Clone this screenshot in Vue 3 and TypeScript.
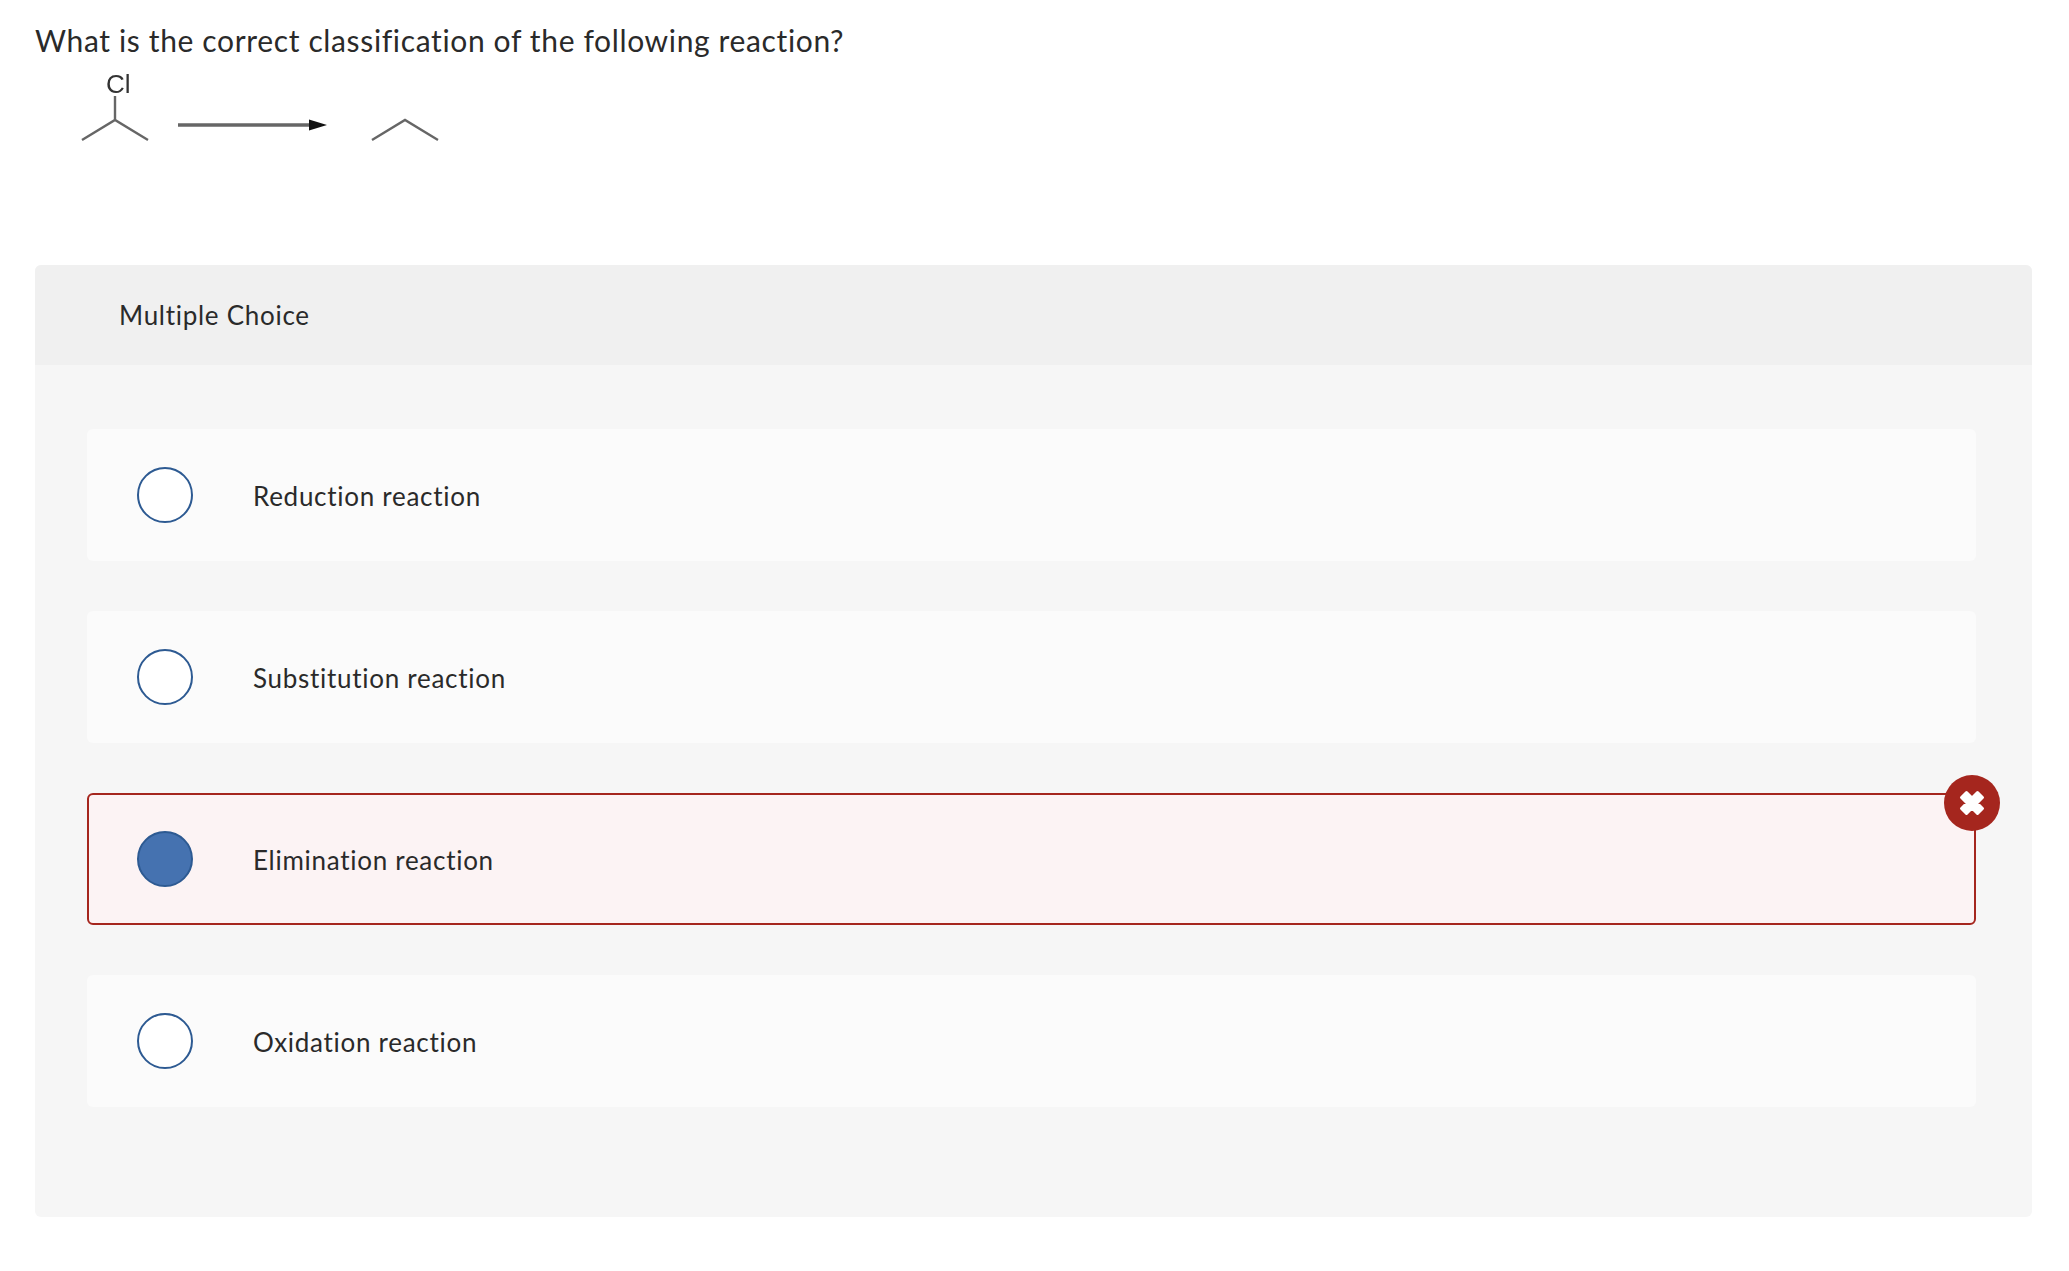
<script setup lang="ts">
interface Choice { label: string; selected: boolean }
const choices: Choice[] = [
  { label: 'Reduction reaction', selected: false },
  { label: 'Substitution reaction', selected: false },
  { label: 'Elimination reaction', selected: true },
  { label: 'Oxidation reaction', selected: false },
]
</script>

<template>
  <main class="page">
    <h1 class="question">What is the correct classification of the following reaction?</h1>
    <div class="figure">
      <svg class="scheme" width="400" height="80" viewBox="0 0 400 80">
        <text class="cl" x="71" y="20.5">Cl</text>
        <g class="bond">
          <path d="M80 24V48M47 68 80 48 113 68" />
          <path d="M337 68 370 48 403 68" />
        </g>
        <path class="arrow" d="M143 53H280" />
        <path class="head" d="M274 47.500 292 53 274 58.500Z" />
      </svg>
    </div>
    <section class="panel">
      <header class="panel-head">Multiple Choice</header>
      <div class="list">
        <div v-for="c in choices" :key="c.label" class="row" :class="{ wrong: c.selected }">
          <span class="radio" :class="{ on: c.selected }"></span>
          <span class="label">{{ c.label }}</span>
          <span v-if="c.selected" class="badge">
            <svg width="28" height="28" viewBox="0 0 28 28">
              <path d="M8.500 3.500 14 9 19.500 3.500 24.500 8.500 19 14 24.500 19.500 19.500 24.500 14 19 8.500 24.500 3.500 19.500 9 14 3.500 8.500Z" />
            </svg>
          </span>
        </div>
      </div>
    </section>
  </main>
</template>

<style scoped>
.page {
  box-sizing: border-box;
  width: 2069px;
  height: 1271px;
  padding: 19px 37px 0 35px;
  font-family: Lato, "Open Sans", sans-serif;
  font-variant-ligatures: none;
  color: #2a2a2a;
  background: #fff;
}
.question {
  margin: 0;
  font-size: 30px;
  line-height: 42px;
  font-weight: 400;
  letter-spacing: 0.64px;
}
.figure {
  box-sizing: border-box;
  height: 204px;
  padding-top: 11px;
}
.scheme {
  display: block;
  overflow: visible;
  filter: blur(0.6px);
}
.cl {
  font-family: "Liberation Sans", Arial, sans-serif;
  font-size: 26px;
  fill: #333;
}
.bond path {
  fill: none;
  stroke: #666;
  stroke-width: 2.4;
}
.arrow {
  fill: none;
  stroke: #666;
  stroke-width: 3.6;
}
.head {
  fill: #111;
}
.panel {
  width: 1997px;
  height: 952px;
  background: #f6f6f6;
  border-radius: 6px;
}
.panel-head {
  box-sizing: border-box;
  height: 100px;
  padding-left: 84px;
  display: flex;
  align-items: center;
  background: #f0f0f0;
  border-radius: 6px 6px 0 0;
  font-size: 26px;
  letter-spacing: 0.72px;
}
.list {
  display: flex;
  flex-direction: column;
  gap: 50px;
  padding: 64px 56px 0 52px;
}
.row {
  position: relative;
  box-sizing: border-box;
  height: 132px;
  display: flex;
  align-items: center;
  padding-left: 50px;
  background: #fbfbfb;
  border-radius: 6px;
}
.row.wrong {
  background: #fcf3f4;
  border: 2px solid #a5261e;
  padding-left: 48px;
}
.radio {
  box-sizing: border-box;
  width: 56px;
  height: 56px;
  flex: none;
  border-radius: 50%;
  border: 2px solid #2d5a92;
  background: #fff;
}
.radio.on {
  background: #4572b0;
}
.label {
  margin-left: 60px;
  padding-top: 2px;
  font-size: 26px;
  line-height: 36px;
  letter-spacing: 0.72px;
}
.badge {
  position: absolute;
  top: -20px;
  right: -26px;
  width: 56px;
  height: 56px;
  border-radius: 50%;
  background: #a5261e;
  display: flex;
  align-items: center;
  justify-content: center;
}
.badge path {
  fill: #fff;
  stroke: #fff;
  stroke-width: 3;
  stroke-linejoin: round;
}
</style>
